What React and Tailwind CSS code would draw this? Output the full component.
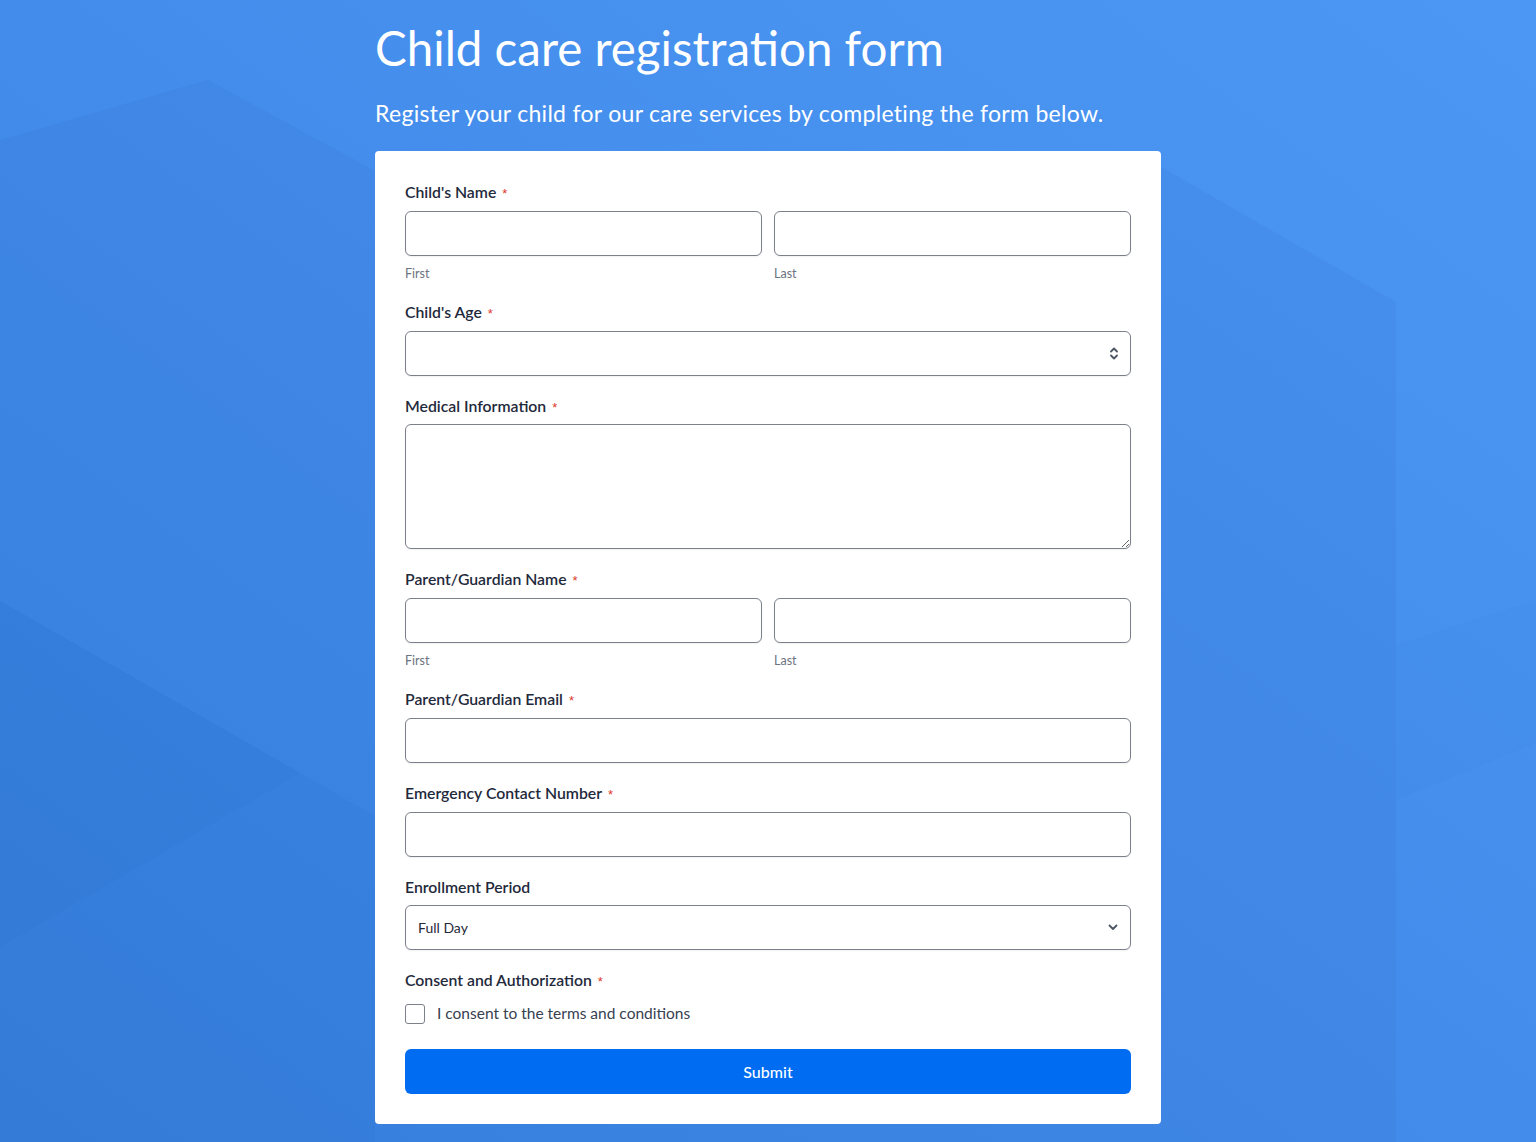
import { useState } from "react";

const font = { fontFamily: "Lato, 'Open Sans', sans-serif" };

function Label({ children, required = true }) {
  return (
    <label className="flex items-center h-5 text-[15.8px] font-semibold text-[#1f2a3c] leading-5">
      {children}
      {required && (
        <span className="ml-[6px] text-[13px] font-normal text-[#e0392b] translate-y-[2px] [font-family:'Liberation_Sans',sans-serif]">
          *
        </span>
      )}
    </label>
  );
}

const inputCls =
  "w-full h-[45px] rounded-md border border-[#7c808b] bg-white px-3 text-[14px] text-[#1f2937] shadow-[0_1px_2px_rgba(0,0,0,0.06)] outline-none";

function NameField({ label }) {
  return (
    <div className="mb-[20px]">
      <Label>{label}</Label>
      <div className="mt-[9px] grid grid-cols-2 gap-3">
        <div>
          <input type="text" className={inputCls} />
          <p className="mt-[10px] text-[12.5px] leading-4 text-[#6b7280]">First</p>
        </div>
        <div>
          <input type="text" className={inputCls} />
          <p className="mt-[10px] text-[12.5px] leading-4 text-[#6b7280]">Last</p>
        </div>
      </div>
    </div>
  );
}

function Background() {
  return (
    <svg className="absolute inset-0 w-full h-full" viewBox="0 0 1536 1142" preserveAspectRatio="none">
      <defs>
        <linearGradient id="bg" x1="1" y1="0" x2="0" y2="1">
          <stop offset="0" stopColor="#4c97f4" />
          <stop offset="0.5" stopColor="#438ceb" />
          <stop offset="1" stopColor="#3882e0" />
        </linearGradient>
      </defs>
      <rect width="1536" height="1142" fill="url(#bg)" />
      <polygon points="0,140 208,80 375,171 1161,167 1396,302 1396,1142 0,1142" fill="#0b3a8a" opacity="0.05" />
      <polygon points="0,601 375,816 375,1142 0,1142" fill="#0b3a8a" opacity="0.035" />
      <polygon points="0,601 300,773 0,947" fill="#0b3a8a" opacity="0.03" />
      <polygon points="1396,645 1536,600 1536,743 1396,800" fill="#0b3a8a" opacity="0.02" />
    </svg>
  );
}

export default function App() {
  const [agree, setAgree] = useState(false);

  return (
    <div className="relative min-h-screen overflow-hidden" style={font}>
      <Background />
      <div className="relative mx-auto w-[786px] pt-[18px] pb-[18px]">
        <h1 className="text-[47.5px] leading-[60px] font-normal text-white">
          Child care registration form
        </h1>
        <p className="mt-[20px] mb-[23px] text-[23px] leading-[30px] text-white tracking-[0.3px]">
          Register your child for our care services by completing the form below.
        </p>

        <form className="rounded bg-white px-[30px] pt-[31px] pb-[30px]" onSubmit={(e) => e.preventDefault()}>
          <NameField label="Child's Name" />

          <div className="mb-5">
            <Label>Child's Age</Label>
            <div className="relative mt-[9px]">
              <input
                type="number"
                className={inputCls + " [appearance:textfield] [&::-webkit-inner-spin-button]:appearance-none"}
              />
              <svg className="absolute right-[12px] top-[15px] w-[10px] h-[15px]" viewBox="0 0 10 15" fill="none" stroke="#4b5563" strokeWidth="1.8" strokeLinecap="round" strokeLinejoin="round">
                <path d="M2 5.5 5 2.5 8 5.5" />
                <path d="M2 9.5 5 12.5 8 9.5" />
              </svg>
            </div>
          </div>

          <div className="mb-5">
            <Label>Medical Information</Label>
            <textarea className="mt-[8px] block w-full h-[125px] rounded-md border border-[#7c808b] bg-white px-3 py-2 text-[14px] shadow-[0_1px_2px_rgba(0,0,0,0.06)] outline-none resize-y" />
          </div>

          <NameField label="Parent/Guardian Name" />

          <div className="mb-5">
            <Label>Parent/Guardian Email</Label>
            <input type="email" className={inputCls + " mt-[9px]"} />
          </div>

          <div className="mb-5">
            <Label>Emergency Contact Number</Label>
            <input type="tel" className={inputCls + " mt-[9px]"} />
          </div>

          <div className="mb-5">
            <Label required={false}>Enrollment Period</Label>
            <div className="relative mt-[8px]">
              <select className={inputCls + " appearance-none"} defaultValue="Full Day">
                <option>Full Day</option>
                <option>Half Day</option>
                <option>Part Time</option>
              </select>
              <svg className="absolute right-[13px] top-[19px] w-[10px] h-[7px]" viewBox="0 0 10 7" fill="none" stroke="#4b5563" strokeWidth="1.8" strokeLinecap="round" strokeLinejoin="round">
                <path d="M1.5 1.5 5 5 8.5 1.5" />
              </svg>
            </div>
          </div>

          <div>
            <Label>Consent and Authorization</Label>
            <label className="mt-[14px] flex h-5 items-center gap-3 cursor-pointer">
              <input
                type="checkbox"
                checked={agree}
                onChange={(e) => setAgree(e.target.checked)}
                className="appearance-none w-5 h-5 rounded-[3px] border border-[#7c808b] bg-white checked:bg-[#006cf2] checked:border-[#006cf2] shrink-0"
              />
              <span className="text-[15.5px] text-[#374151]">I consent to the terms and conditions</span>
            </label>
          </div>

          <button
            type="submit"
            className="mt-[25px] w-full h-[45px] rounded-md bg-[#006cf2] text-white text-[16px] font-medium"
          >
            Submit
          </button>
        </form>
      </div>
    </div>
  );
}
